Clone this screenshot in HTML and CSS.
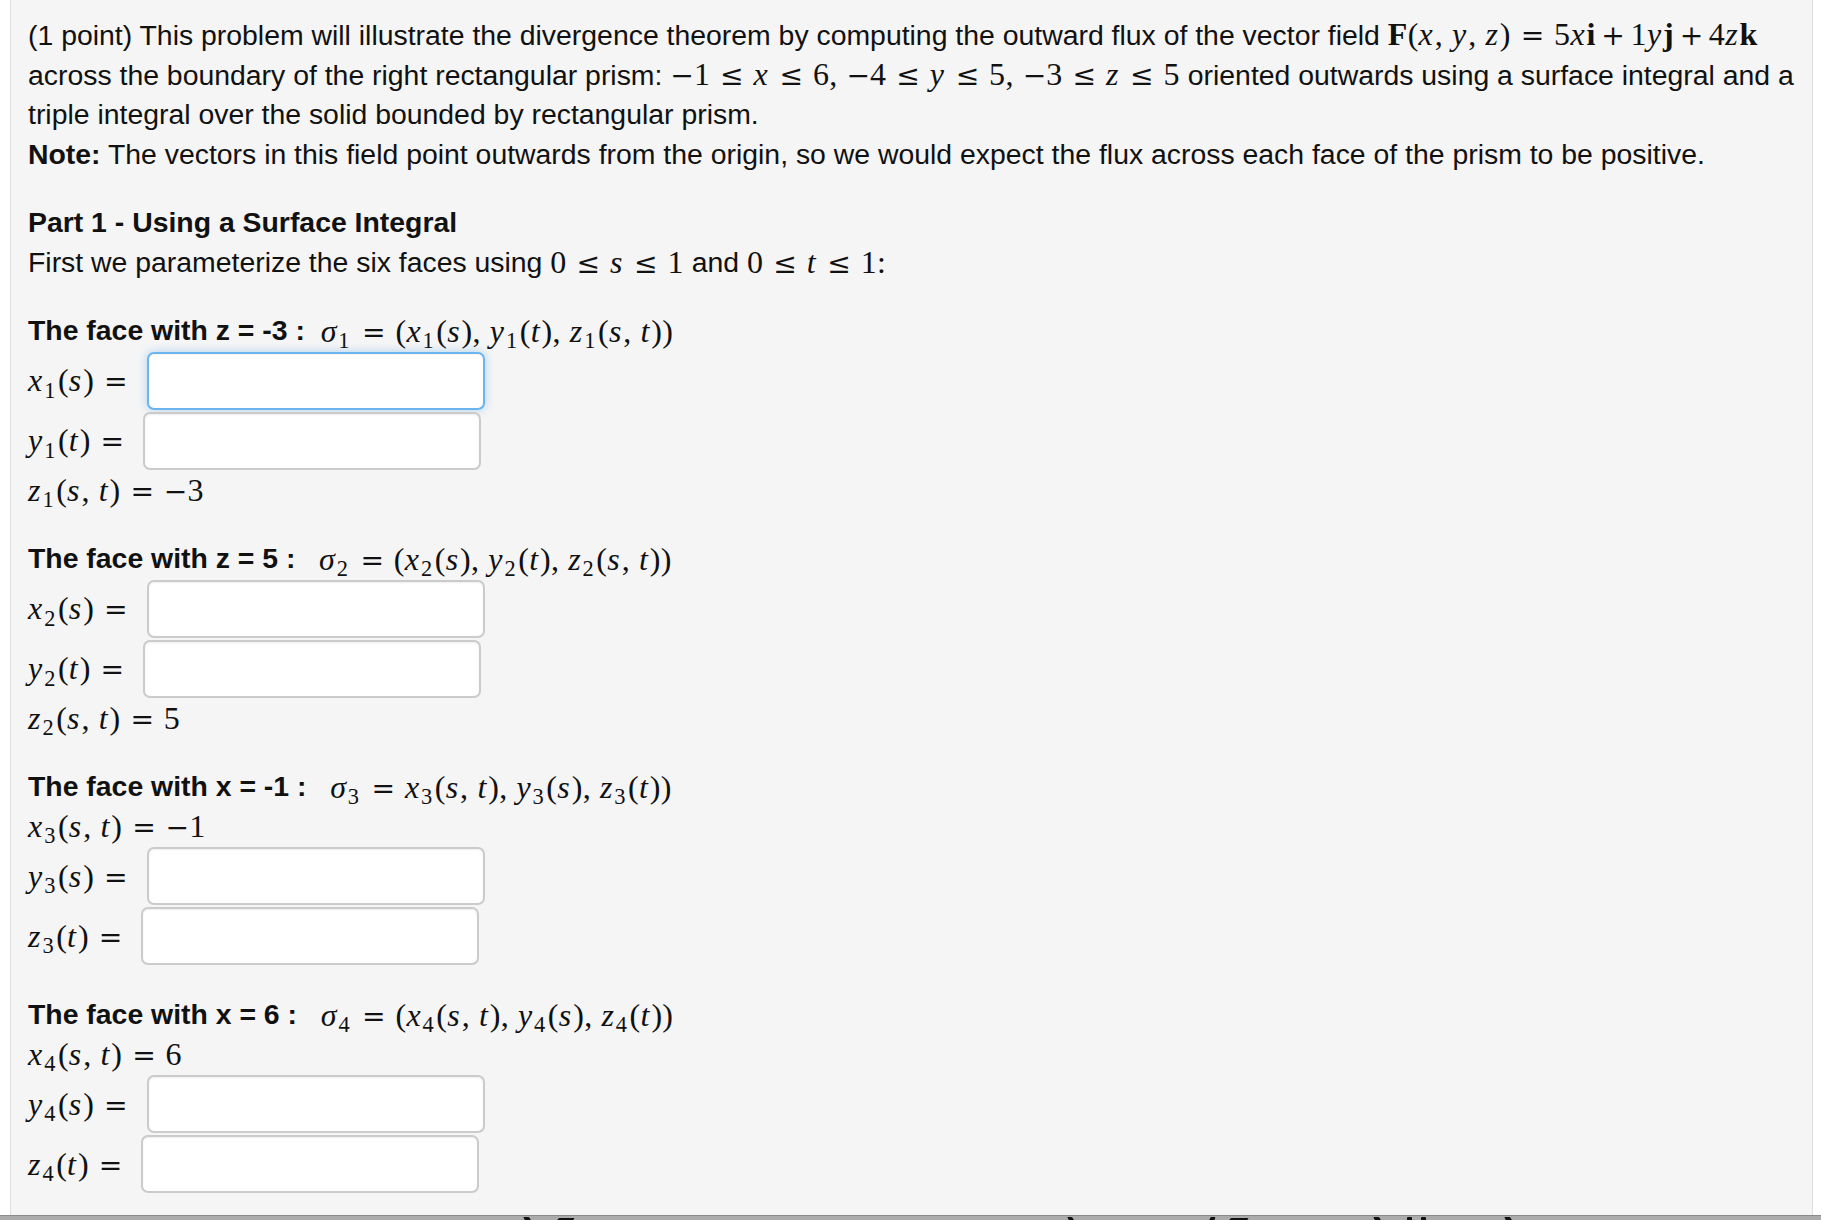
FILE: index.html
```html
<!DOCTYPE html>
<html lang="en">
<head>
<meta charset="utf-8">
<title>Divergence theorem problem</title>
<link rel="stylesheet" href="styles.css">
</head>
<body>
<div class="page">
  <div class="panel">
    <p class="intro">(1 point) This problem will illustrate the divergence theorem by computing the outward flux of the vector field <span class="m"><b class="bf">F</b>(<i>x</i>,<span class="th"></span><i>y</i>,<span class="th"></span><i>z</i>)<span class="rel">=</span>5<i>x</i><b class="bf">i</b><span class="bin">+</span>1<i>y</i><b class="bf">j</b><span class="bin">+</span>4<i>z</i><b class="bf">k</b></span><br>across the boundary of the right rectangular prism: <span class="m"><span class="op">−</span>1<span class="rel">≤</span><i>x</i><span class="rel">≤</span>6,<span class="th"></span><span class="op">−</span>4<span class="rel">≤</span><i>y</i><span class="rel">≤</span>5,<span class="th"></span><span class="op">−</span>3<span class="rel">≤</span><i>z</i><span class="rel">≤</span>5</span> oriented outwards using a surface integral and a<br>triple integral over the solid bounded by rectangular prism.<br><b>Note:</b> The vectors in this field point outwards from the origin, so we would expect the flux across each face of the prism to be positive.</p>

    <div class="block">
      <div class="line"><b>Part 1 - Using a Surface Integral</b></div>
      <div class="line">First we parameterize the six faces using&nbsp;<span class="m">0<span class="rel">≤</span><i>s</i><span class="rel">≤</span>1</span>&nbsp;and&nbsp;<span class="m">0<span class="rel">≤</span><i>t</i><span class="rel">≤</span>1:</span></div>
    </div>

    <div class="block">
      <div class="line"><b>The face with z = -3 :</b>&nbsp;&nbsp;<span class="m"><i>σ</i><sub>1</sub><span class="rel">=</span>(<i>x</i><sub>1</sub>(<i>s</i>),<span class="th"></span><i>y</i><sub>1</sub>(<i>t</i>),<span class="th"></span><i>z</i><sub>1</sub>(<i>s</i>,<span class="th"></span><i>t</i>))</span></div>
      <div class="inrow"><span class="m"><i>x</i><sub>1</sub>(<i>s</i>)<span class="rel">=</span></span><input class="ans focus" type="text"></div>
      <div class="inrow"><span class="m"><i>y</i><sub>1</sub>(<i>t</i>)<span class="rel">=</span></span><input class="ans" type="text"></div>
      <div class="line"><span class="m"><i>z</i><sub>1</sub>(<i>s</i>,<span class="th"></span><i>t</i>)<span class="rel">=</span><span class="op">−</span>3</span></div>
    </div>

    <div class="block">
      <div class="line"><b>The face with z = 5 :</b>&nbsp;&nbsp;&nbsp;<span class="m"><i>σ</i><sub>2</sub><span class="rel">=</span>(<i>x</i><sub>2</sub>(<i>s</i>),<span class="th"></span><i>y</i><sub>2</sub>(<i>t</i>),<span class="th"></span><i>z</i><sub>2</sub>(<i>s</i>,<span class="th"></span><i>t</i>))</span></div>
      <div class="inrow"><span class="m"><i>x</i><sub>2</sub>(<i>s</i>)<span class="rel">=</span></span><input class="ans" type="text"></div>
      <div class="inrow"><span class="m"><i>y</i><sub>2</sub>(<i>t</i>)<span class="rel">=</span></span><input class="ans" type="text"></div>
      <div class="line"><span class="m"><i>z</i><sub>2</sub>(<i>s</i>,<span class="th"></span><i>t</i>)<span class="rel">=</span>5</span></div>
    </div>

    <div class="block">
      <div class="line"><b>The face with x = -1 :</b>&nbsp;&nbsp;&nbsp;<span class="m"><i>σ</i><sub>3</sub><span class="rel">=</span><i>x</i><sub>3</sub>(<i>s</i>,<span class="th"></span><i>t</i>),<span class="th"></span><i>y</i><sub>3</sub>(<i>s</i>),<span class="th"></span><i>z</i><sub>3</sub>(<i>t</i>))</span></div>
      <div class="line"><span class="m"><i>x</i><sub>3</sub>(<i>s</i>,<span class="th"></span><i>t</i>)<span class="rel">=</span><span class="op">−</span>1</span></div>
      <div class="inrow"><span class="m"><i>y</i><sub>3</sub>(<i>s</i>)<span class="rel">=</span></span><input class="ans" type="text"></div>
      <div class="inrow"><span class="m"><i>z</i><sub>3</sub>(<i>t</i>)<span class="rel">=</span></span><input class="ans" type="text"></div>
    </div>

    <div class="block">
      <div class="line"><b>The face with x = 6 :</b>&nbsp;&nbsp;&nbsp;<span class="m"><i>σ</i><sub>4</sub><span class="rel">=</span>(<i>x</i><sub>4</sub>(<i>s</i>,<span class="th"></span><i>t</i>),<span class="th"></span><i>y</i><sub>4</sub>(<i>s</i>),<span class="th"></span><i>z</i><sub>4</sub>(<i>t</i>))</span></div>
      <div class="line"><span class="m"><i>x</i><sub>4</sub>(<i>s</i>,<span class="th"></span><i>t</i>)<span class="rel">=</span>6</span></div>
      <div class="inrow"><span class="m"><i>y</i><sub>4</sub>(<i>s</i>)<span class="rel">=</span></span><input class="ans" type="text"></div>
      <div class="inrow"><span class="m"><i>z</i><sub>4</sub>(<i>t</i>)<span class="rel">=</span></span><input class="ans" type="text"></div>
    </div>
  </div>
  <div class="strip">
    <span class="frag f1"></span><span class="frag f2"></span><span class="frag f3"></span><span class="frag f4"></span><span class="frag f5"></span><span class="frag f6"></span><span class="frag f7"></span><span class="frag f8"></span><span class="frag f9"></span>
  </div>
</div>
</body>
</html>
```

FILE: styles.css
```css
html, body {
  margin: 0;
  padding: 0;
  background: #ffffff;
  overflow: hidden;
}

.page {
  width: 1821px;
  height: 1220px;
  display: flex;
  flex-direction: column;
}

.panel {
  box-sizing: border-box;
  height: 1215px;
  margin: 0 8px 0 10px;
  padding: 16px 17px 0 17px;
  background: #f5f5f5;
  border-left: 1px solid #dedede;
  border-right: 1px solid #dedede;
  font-family: "Liberation Sans", Arial, Helvetica, sans-serif;
  font-size: 28.4px;
  line-height: 39.5px;
  color: #111111;
}

.intro {
  margin: 0;
  white-space: nowrap;
}

.block {
  margin-top: 29px;
}

.line {
  height: 39.5px;
  display: flex;
  align-items: center;
  white-space: nowrap;
}

.inrow {
  height: 60px;
  display: flex;
  align-items: center;
  white-space: nowrap;
}

.m {
  font-family: "Liberation Serif", "Times New Roman", serif;
  font-size: 32px;
  line-height: 1;
  font-weight: normal;
  letter-spacing: 0.01em;
  white-space: nowrap;
}

.m i {
  font-style: italic;
  padding-right: 0.05em;
}

.m sub {
  font-size: 0.7em;
  font-style: normal;
  vertical-align: -0.28em;
  line-height: 0;
  margin-right: 0.1em;
}

.m .bf {
  font-weight: bold;
  font-style: normal;
}

.rel,
.bin,
.op {
  font-family: "DejaVu Serif", "Liberation Serif", serif;
  font-size: 0.88em;
  letter-spacing: 0;
}

.rel {
  margin: 0 0.35em;
}

.bin {
  margin: 0 0.2em;
}

.th {
  display: inline-block;
  width: 0.28em;
}

.ans {
  box-sizing: border-box;
  width: 338px;
  height: 58px;
  margin: 0 0 0 9px;
  padding: 6px 10px;
  background: #ffffff;
  border: 2px solid #cbcbcb;
  border-radius: 7px;
  box-shadow: inset 0 1px 2px rgba(0, 0, 0, 0.07);
  font-size: 24px;
  outline: none;
}

.ans.focus {
  border-color: #6cb4ee;
  box-shadow: inset 0 1px 2px rgba(0, 0, 0, 0.05), 0 0 10px rgba(82, 168, 236, 0.45);
}

.strip {
  position: relative;
  height: 5px;
  box-sizing: border-box;
  background: #ababab;
  border-top: 1px solid #8a8a8a;
  overflow: hidden;
}

.frag {
  position: absolute;
  bottom: 0;
  height: 3px;
  background: #111111;
  border-radius: 1px 1px 0 0;
}

.f1 { left: 524px; width: 6px; transform: skewX(30deg); }
.f2 { left: 558px; width: 16px; height: 2px; transform: skewX(-40deg); }
.f3 { left: 1068px; width: 5px; transform: skewX(30deg); }
.f4 { left: 1210px; width: 5px; transform: skewX(-20deg); }
.f5 { left: 1230px; width: 18px; height: 2px; transform: skewX(-40deg); }
.f6 { left: 1374px; width: 6px; transform: skewX(30deg); }
.f7 { left: 1407px; width: 5px; }
.f8 { left: 1421px; width: 5px; }
.f9 { left: 1505px; width: 6px; transform: skewX(30deg); }
```
